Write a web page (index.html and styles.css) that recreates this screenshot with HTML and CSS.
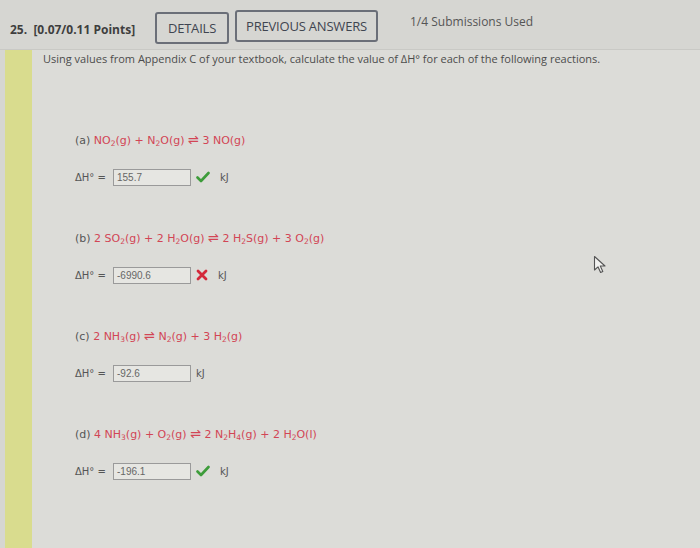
FILE: index.html
```html
<!DOCTYPE html>
<html>
<head>
<meta charset="utf-8">
<link rel="stylesheet" href="styles.css">
</head>
<body>
<div class="header">
  <div class="qnum">25. &nbsp;[0.07/0.11 Points]</div>
  <div class="btn btn-details">DETAILS</div>
  <div class="btn btn-prev">PREVIOUS ANSWERS</div>
  <div class="subs">1/4 Submissions Used</div>
</div>
<div class="main">
  <div class="bar"></div>
  <div class="content">
    <p class="intro">Using values from Appendix C of your textbook, calculate the value of &Delta;H&deg; for each of the following reactions.</p>

    <div class="part">
      <div class="eq">(a) <span class="rx">NO<sub>2</sub>(g) + N<sub>2</sub>O(g) <span class="arr">&#8652;</span> 3 NO(g)</span></div>
      <div class="ans">
        <span class="dh">&Delta;H&deg; =</span>
        <span class="box">155.7</span>
        <svg class="mark" width="14" height="12" viewBox="0 0 14 12"><path d="M1.5 6.5 L5 10 L12.5 2" fill="none" stroke="#3d9c3a" stroke-width="2.6" stroke-linecap="round" stroke-linejoin="round"/></svg>
        <span class="kj kj-a">kJ</span>
      </div>
    </div>

    <div class="part">
      <div class="eq">(b) <span class="rx">2 SO<sub>2</sub>(g) + 2 H<sub>2</sub>O(g) <span class="arr">&#8652;</span> 2 H<sub>2</sub>S(g) + 3 O<sub>2</sub>(g)</span></div>
      <div class="ans">
        <span class="dh">&Delta;H&deg; =</span>
        <span class="box">-6990.6</span>
        <svg class="mark" width="12" height="12" viewBox="0 0 12 12"><path d="M2 2 L10 10 M10 2 L2 10" fill="none" stroke="#d4283a" stroke-width="2.8" stroke-linecap="round"/></svg>
        <span class="kj">kJ</span>
      </div>
    </div>

    <div class="part">
      <div class="eq">(c) <span class="rx">2 NH<sub>3</sub>(g) <span class="arr">&#8652;</span> N<sub>2</sub>(g) + 3 H<sub>2</sub>(g)</span></div>
      <div class="ans">
        <span class="dh">&Delta;H&deg; =</span>
        <span class="box">-92.6</span>
        <span class="kj kj-c">kJ</span>
      </div>
    </div>

    <div class="part">
      <div class="eq">(d) <span class="rx">4 NH<sub>3</sub>(g) + O<sub>2</sub>(g) <span class="arr">&#8652;</span> 2 N<sub>2</sub>H<sub>4</sub>(g) + 2 H<sub>2</sub>O(<i class="l">l</i>)</span></div>
      <div class="ans">
        <span class="dh">&Delta;H&deg; =</span>
        <span class="box">-196.1</span>
        <svg class="mark" width="14" height="12" viewBox="0 0 14 12"><path d="M1.5 6.5 L5 10 L12.5 2" fill="none" stroke="#3d9c3a" stroke-width="2.6" stroke-linecap="round" stroke-linejoin="round"/></svg>
        <span class="kj kj-a">kJ</span>
      </div>
    </div>
  </div>
</div>
<svg class="cursor" width="14" height="20" viewBox="0 0 14 20"><path d="M1.5 1.5 L1.5 15 L5 11.8 L7.6 17.5 L9.8 16.5 L7.3 11 L12 11 Z" fill="#f2f2f0" stroke="#555" stroke-width="1.1" stroke-linejoin="round"/></svg>
</body>
</html>
```
FILE: styles.css
```css
html, body {
  margin: 0;
  padding: 0;
}
body {
  width: 700px;
  height: 548px;
  overflow: hidden;
  background: #d6d6d2;
  font-family: "Open Sans", "DejaVu Sans", sans-serif;
  color: #4a4a4a;
  position: relative;
}
.header {
  display: flex;
  align-items: center;
  height: 50px;
  padding-left: 10px;
  box-sizing: border-box;
  border-bottom: 1px solid #c9c9c5;
}
.qnum {
  font-weight: bold;
  font-size: 12px;
  color: #3e3e3e;
  width: 145px;
  margin-top: 10px;
}
.btn {
  border: 2px solid #6b6f78;
  border-radius: 3px;
  font-size: 13px;
  color: #3f4550;
  display: flex;
  align-items: center;
  justify-content: center;
  box-sizing: border-box;
  letter-spacing: -0.2px;
}
.btn-details {
  width: 74px;
  height: 32px;
  margin-top: 6px;
}
.btn-prev {
  width: 143px;
  height: 32px;
  margin-left: 6px;
  margin-top: 2px;
}
.subs {
  font-size: 12px;
  color: #555;
  margin-left: 32px;
  margin-top: -6px;
}
.main {
  display: flex;
  height: 498px;
}
.bar {
  width: 27px;
  margin-left: 5px;
  background: #d9dc8e;
}
.content {
  flex: 1;
  background: #dcdcd8;
  padding-top: 1px;
}
.intro {
  margin: 0 0 0 11px;
  font-size: 11px;
  line-height: 16px;
  color: #4c4c4c;
}
.part {
  margin-left: 43px;
}
.intro + .part {
  margin-top: 63px;
}
.part + .part {
  margin-top: 42px;
}
.eq {
  height: 20px;
  line-height: 20px;
  font-family: "DejaVu Sans", "Open Sans", sans-serif;
  font-size: 11px;
  color: #555;
}
.rx {
  color: #d24555;
}
.arr {
  font-size: 13px;
}
sub {
  font-size: 7.5px;
  vertical-align: -2px;
  line-height: 0;
}
.l {
  font-style: normal;
}
.ans {
  display: flex;
  align-items: center;
  height: 18px;
  margin-top: 18px;
  font-family: "DejaVu Sans", "Open Sans", sans-serif;
  font-size: 10px;
}
.dh {
  color: #555;
  width: 38px;
}
.box {
  width: 78px;
  height: 17px;
  box-sizing: border-box;
  border: 1px solid #9a9a9a;
  background: #e6e6e2;
  color: #666;
  font-family: "Liberation Sans", Arial, sans-serif;
  font-size: 10px;
  line-height: 15px;
  padding-left: 3px;
}
.mark {
  margin-left: 5px;
}
.kj {
  margin-left: 10px;
  color: #555;
}
.kj-c {
  margin-left: 5px;
}
.cursor {
  position: absolute;
  left: 593px;
  top: 255px;
}
```
